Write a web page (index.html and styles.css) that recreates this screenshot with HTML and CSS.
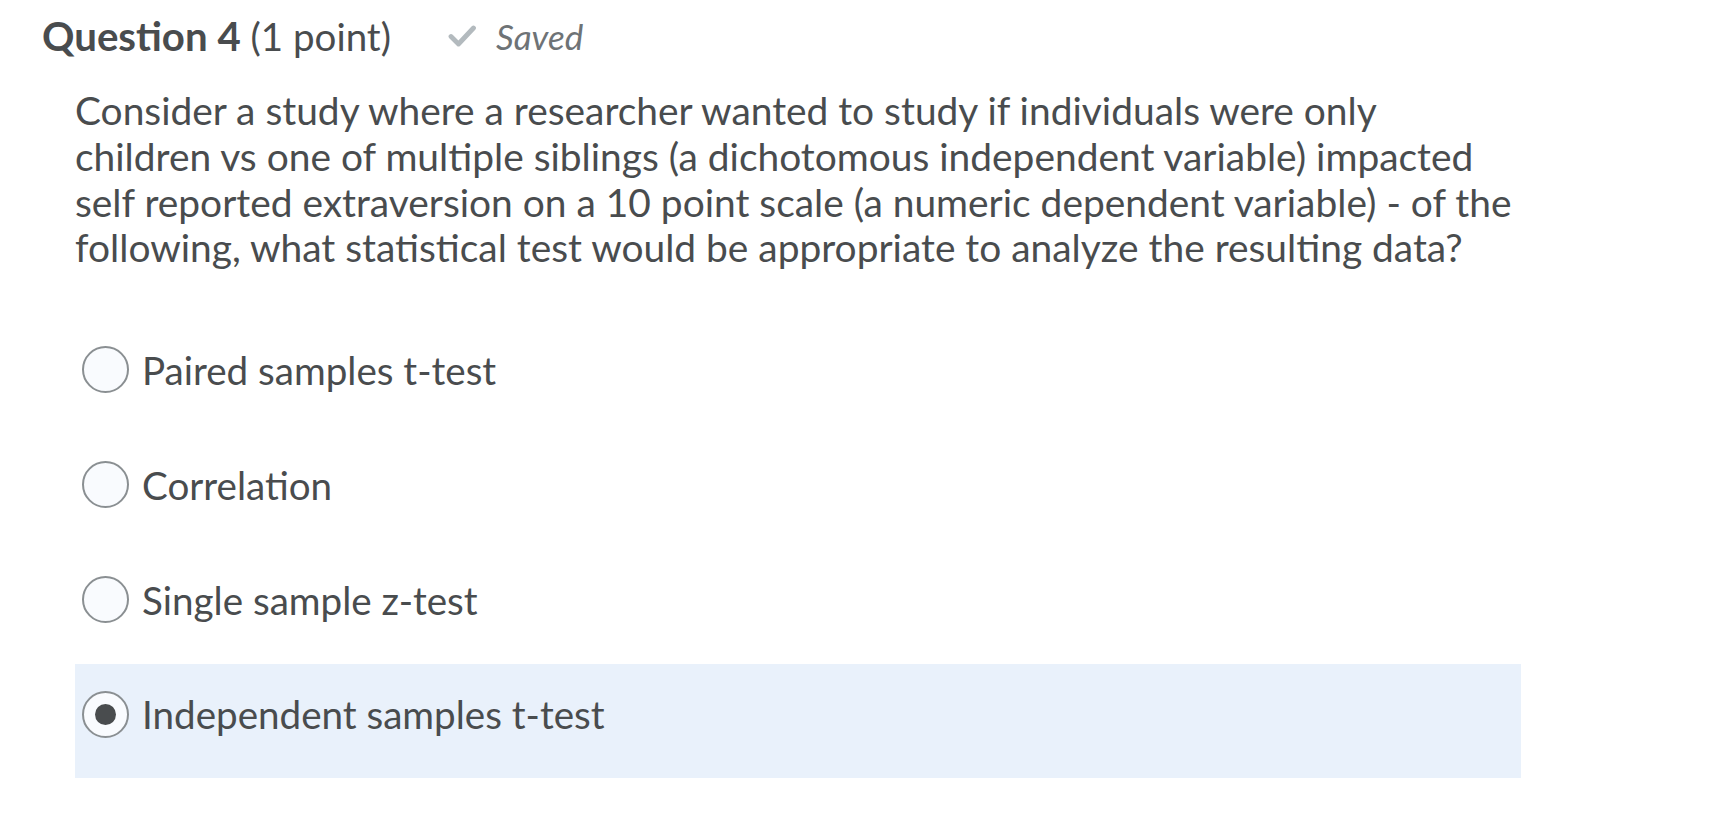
FILE: index.html
```html
<!DOCTYPE html>
<html lang="en">
<head>
<meta charset="utf-8">
<title>Question 4</title>
<link rel="stylesheet" href="styles.css">
</head>
<body>
<div class="question">
  <div class="q-header">
    <h2 class="q-title"><strong>Question 4</strong> (1 point)</h2>
    <span class="saved">
      <svg class="check" viewBox="0 0 28 22" width="28" height="22" aria-hidden="true">
        <path d="M3 11.5 L10.5 19 L25.5 3" fill="none" stroke="#b3babe" stroke-width="4.8" stroke-linecap="round" stroke-linejoin="round"/>
      </svg>
      <span class="saved-text">Saved</span>
    </span>
  </div>
  <div class="q-body">
    <p class="q-text">Consider a study where a researcher wanted to study if individuals were only children vs one of multiple siblings (a dichotomous independent variable) impacted self reported extraversion on a 10 point scale (a numeric dependent variable) - of the following, what statistical test would be appropriate to analyze the resulting data?</p>
    <div class="options">
      <label class="option"><span class="radio"></span><span class="opt-text">Paired samples t-test</span></label>
      <label class="option"><span class="radio"></span><span class="opt-text">Correlation</span></label>
      <label class="option"><span class="radio"></span><span class="opt-text">Single sample z-test</span></label>
      <label class="option selected"><span class="radio checked"></span><span class="opt-text">Independent samples t-test</span></label>
    </div>
  </div>
</div>
</body>
</html>
```
FILE: styles.css
```css
html, body {
  margin: 0;
  padding: 0;
  background: #ffffff;
}
body {
  font-family: Lato, "Open Sans", sans-serif;
  color: #494c4e;
}
.question {
  padding-top: 12px;
}
.q-header {
  display: flex;
  align-items: center;
  padding-left: 42px;
  height: 48px;
}
.q-title {
  margin: 0;
  font-size: 38.5px;
  font-weight: 400;
  line-height: 48px;
}
.q-title strong {
  font-weight: 700;
  font-size: 40.2px;
}
.saved {
  display: flex;
  align-items: center;
  margin-left: 57px;
  color: #6e7376;
}
.check {
  display: block;
}
.saved-text {
  margin-left: 20px;
  font-style: italic;
  font-size: 35px;
}
.q-body {
  margin-left: 75px;
  width: 1446px;
}
.q-text {
  margin: 28px 0 0 0;
  padding-right: 3px;
  font-size: 38.9px;
  line-height: 45.8px;
}
.options {
  margin-top: 48px;
  display: flex;
  flex-direction: column;
}
.option {
  display: flex;
  align-items: center;
  box-sizing: border-box;
  height: 115px;
  padding: 27px 0 41px 7px;
  font-size: 38.6px;
  line-height: 46px;
}
.option.selected {
  background: #e9f1fb;
  height: 114px;
}
.radio {
  box-sizing: border-box;
  width: 47px;
  height: 47px;
  border: 2px solid #8a8f92;
  border-radius: 50%;
  background: #f9fbfe;
  display: flex;
  align-items: center;
  justify-content: center;
  flex: none;
}
.radio.checked::after {
  content: "";
  width: 21px;
  height: 21px;
  border-radius: 50%;
  background: #494c4e;
}
.opt-text {
  margin-left: 13px;
}
```
